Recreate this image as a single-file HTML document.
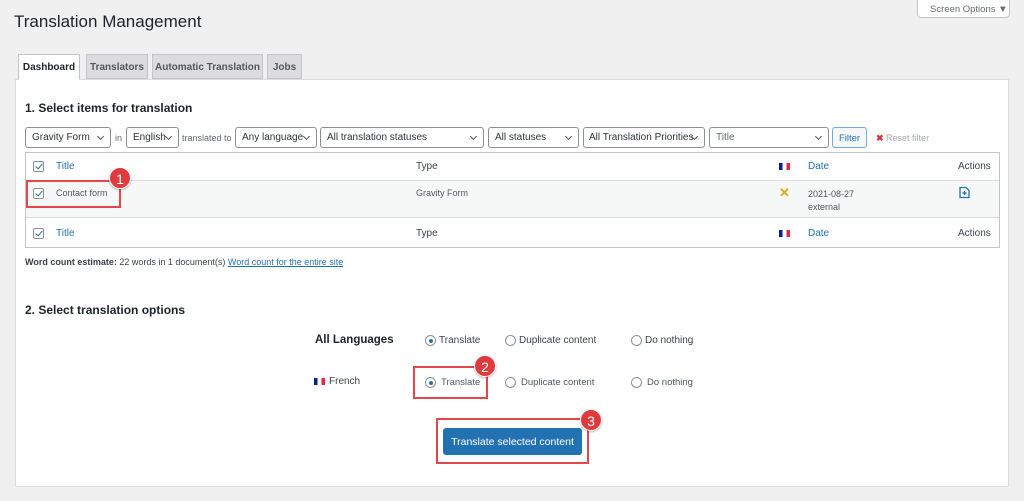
<!DOCTYPE html>
<html><head><meta charset="utf-8"><style>
*{box-sizing:border-box;margin:0;padding:0}
body{width:1024px;height:501px;background:#f0f0f1;font-family:"Liberation Sans",sans-serif;color:#3c434a;position:relative;overflow:hidden;font-size:10px}
.a{position:absolute;white-space:nowrap}
.sel{position:absolute;top:127px;height:21px;border:1px solid #8c8f94;border-radius:3px;background:#fff;font-size:10px;color:#2c3338;padding:4px 6px;line-height:12px;white-space:nowrap;overflow:hidden}
.sel:after{content:"";position:absolute;right:7px;top:6px;width:4px;height:4px;border-right:1.3px solid #50575e;border-bottom:1.3px solid #50575e;transform:rotate(45deg)}
.tab{position:absolute;top:54px;height:25px;border:1px solid #c3c4c7;background:#dcdcde;font-size:10px;font-weight:bold;color:#50575e;padding:7px 0 0;text-align:center}
.cb{position:absolute;width:11px;height:11px;border:1px solid #8c8f94;border-radius:2px;background:#fff}
.cb:after{content:"";position:absolute;left:3px;top:0px;width:3px;height:6px;border-right:1.6px solid #2271b1;border-bottom:1.6px solid #2271b1;transform:rotate(40deg)}
.rd{position:absolute;width:11px;height:11px;border:1px solid #8c8f94;border-radius:50%;background:#fff}
.rd.on:after{content:"";position:absolute;left:2.5px;top:2.5px;width:4px;height:4px;border-radius:50%;background:#2271b1}
.lk{color:#2271b1}
.flag{position:absolute;width:11px;height:7px;background:linear-gradient(90deg,#002395 0 33%,#fff 33% 66%,#ed2939 66%)}
.box{position:absolute;border:2px solid #e8454a}
.num{position:absolute;width:22px;height:22px;border-radius:50%;background:#e0393e;color:#fff;font-size:14px;text-align:center;line-height:22px;border:1px solid #fff;box-shadow:0 1px 2px rgba(0,0,0,.3)}
</style></head><body>
<div class="a" style="left:14px;top:12px;font-size:17px;color:#1d2327">Translation Management</div>
<div class="a" style="left:917px;top:-1px;width:93px;height:19px;background:#fff;border:1px solid #c3c4c7;border-radius:0 0 4px 4px;font-size:9.5px;color:#646970;padding:4px 0 0 12px">Screen Options &#9660;</div>
<div class="a" style="left:15px;top:79px;width:994px;height:408px;background:#fff;border:1px solid #dcdcde"></div>
<div class="tab" style="left:18px;width:62px;background:#fff;border-bottom-color:#fff;color:#1d2327;height:26px">Dashboard</div>
<div class="tab" style="left:86px;width:62px">Translators</div>
<div class="tab" style="left:152px;width:111px">Automatic Translation</div>
<div class="tab" style="left:267px;width:35px">Jobs</div>
<div class="a" style="left:25px;top:101px;font-size:12px;font-weight:bold;color:#1d2327">1. Select items for translation</div>
<div class="sel" style="left:25px;width:86px">Gravity Form</div>
<div class="a" style="left:115px;top:133px;font-size:9px;color:#646970">in</div>
<div class="sel" style="left:126px;width:53px">English</div>
<div class="a" style="left:182px;top:133px;font-size:9px;color:#646970">translated to</div>
<div class="sel" style="left:235px;width:82px">Any language</div>
<div class="sel" style="left:320px;width:164px">All translation statuses</div>
<div class="sel" style="left:488px;width:91px">All statuses</div>
<div class="sel" style="left:583px;width:122px;padding-left:5px">All Translation Priorities</div>
<div class="sel" style="left:709px;width:120px;color:#646970">Title</div>
<div class="a" style="left:832px;top:127px;width:35px;height:21px;border:1px solid #72aee6;border-radius:3px;background:#f6f7f7;color:#2271b1;font-size:9.5px;padding:5px 0 0;text-align:center">Filter</div>
<div class="a" style="left:876px;top:133px;font-size:9px;color:#a7aaad"><span style="color:#d63638;font-weight:bold">✖</span> Reset filter</div>
<div class="a" style="left:25px;top:152px;width:975px;height:96px;border:1px solid #c3c4c7"></div>
<div class="a" style="left:26px;top:180px;width:973px;height:38px;background:#f6f7f7;border-top:1px solid #dcdcde;border-bottom:1px solid #dcdcde"></div>
<div class="cb" style="left:33px;top:161px"></div>
<div class="a lk" style="left:56px;top:161px;font-size:10px">Title</div>
<div class="a" style="left:416px;top:161px;font-size:10px">Type</div>
<div class="flag" style="left:779px;top:163px"></div>
<div class="a lk" style="left:808px;top:161px;font-size:10px">Date</div>
<div class="a" style="left:958px;top:161px;font-size:10px">Actions</div>
<div class="cb" style="left:33px;top:188px"></div>
<div class="a" style="left:56px;top:188px;font-size:9px;color:#50575e">Contact form</div>
<div class="a" style="left:416px;top:188px;font-size:9px;color:#50575e">Gravity Form</div>
<div class="a" style="left:779px;top:185px;font-size:13px;color:#dba617;font-weight:bold">✕</div>
<div class="a" style="left:808px;top:188px;font-size:9px;color:#50575e;line-height:13px">2021-08-27<br>external</div>
<svg class="a" style="left:958px;top:186px" width="13" height="13" viewBox="0 0 13 13"><path d="M2 1.5h6l3 3v7H2z" fill="none" stroke="#2271b1" stroke-width="1.3"/><path d="M6.5 5v4M4.5 7h4" stroke="#2271b1" stroke-width="1.3"/></svg>
<div class="cb" style="left:33px;top:228px"></div>
<div class="a lk" style="left:56px;top:228px;font-size:10px">Title</div>
<div class="a" style="left:416px;top:228px;font-size:10px">Type</div>
<div class="flag" style="left:779px;top:230px"></div>
<div class="a lk" style="left:808px;top:228px;font-size:10px">Date</div>
<div class="a" style="left:958px;top:228px;font-size:10px">Actions</div>
<div class="a" style="left:25px;top:257px;font-size:9px;color:#3c434a"><b>Word count estimate:</b> 22 words in 1 document(s) <span class="lk" style="text-decoration:underline">Word count for the entire site</span></div>
<div class="a" style="left:25px;top:303px;font-size:12px;font-weight:bold;color:#1d2327">2. Select translation options</div>
<div class="a" style="left:315px;top:334px;font-size:11.5px;font-weight:bold;color:#1d2327">All Languages</div>
<div class="rd on" style="left:425px;top:335px"></div><div class="a" style="left:439px;top:335px;font-size:10px">Translate</div>
<div class="rd" style="left:505px;top:335px"></div><div class="a" style="left:519px;top:335px;font-size:10px">Duplicate content</div>
<div class="rd" style="left:631px;top:335px"></div><div class="a" style="left:645px;top:335px;font-size:10px">Do nothing</div>
<div class="flag" style="left:314px;top:378px"></div><div class="a" style="left:329px;top:376px;font-size:10px">French</div>
<div class="rd on" style="left:425px;top:377px"></div><div class="a" style="left:441px;top:377px;font-size:9.5px;color:#50575e">Translate</div>
<div class="rd" style="left:505px;top:377px"></div><div class="a" style="left:521px;top:377px;font-size:9.5px;color:#50575e">Duplicate content</div>
<div class="rd" style="left:631px;top:377px"></div><div class="a" style="left:647px;top:377px;font-size:9.5px;color:#50575e">Do nothing</div>
<div class="a" style="left:443px;top:428px;width:139px;height:27px;background:#2271b1;border-radius:3px;color:#fff;font-size:10.5px;text-align:center;padding-top:8px">Translate selected content</div>
<div class="box" style="left:26px;top:180px;width:95px;height:28px"></div>
<div class="box" style="left:413px;top:366px;width:75px;height:33px"></div>
<div class="box" style="left:436px;top:418px;width:153px;height:46px"></div>
<div class="num" style="left:109px;top:167px">1</div>
<div class="num" style="left:474px;top:355px">2</div>
<div class="num" style="left:580px;top:409px">3</div>
</body></html>
